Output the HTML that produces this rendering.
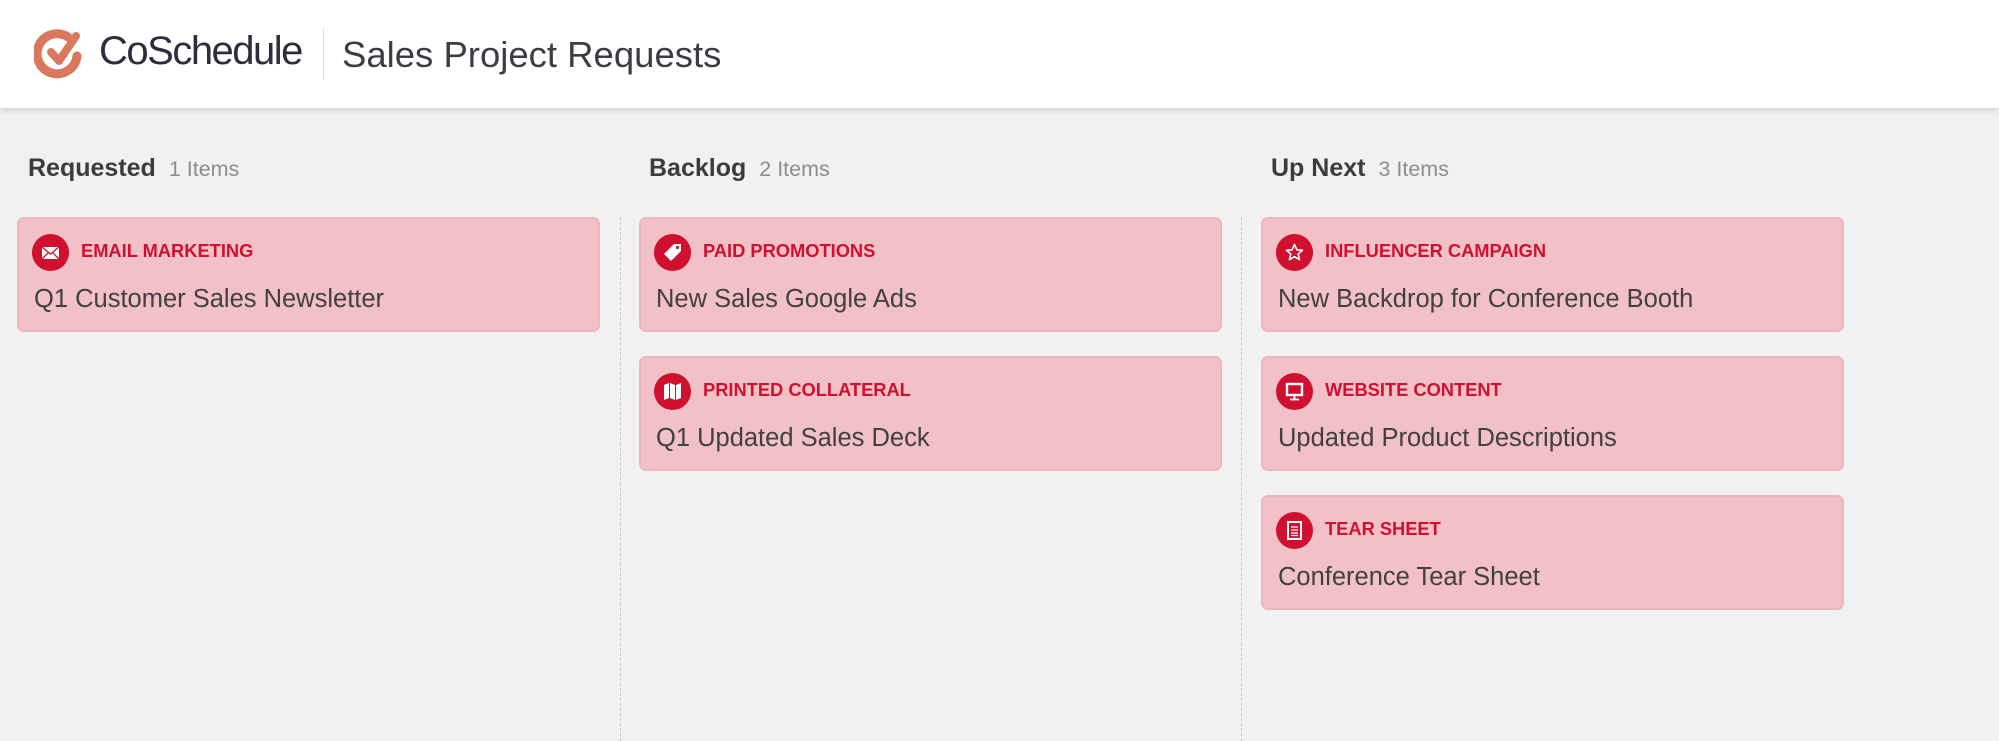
<!DOCTYPE html>
<html><head><meta charset="utf-8"><style>
*{margin:0;padding:0;box-sizing:border-box}
body{width:1999px;height:741px;background:#f1f1f1;font-family:"Liberation Sans",Arial,sans-serif;position:relative;overflow:hidden}
.hdr{position:absolute;left:0;top:0;width:1999px;height:108px;background:#fff;box-shadow:0 2px 6px rgba(0,0,0,.15)}
.brand{position:absolute;left:99px;top:29px;font-size:40px;color:#2f2d3d;letter-spacing:-1.5px}
.div{position:absolute;left:323px;top:28px;width:1px;height:52px;background:#ddd}
.title{position:absolute;left:342px;top:34px;font-size:36.5px;color:#3f3b44}
.colh{position:absolute;top:154px;font-size:25px;font-weight:bold;color:#3c3c3c}
.colh span{font-weight:normal;font-size:21.5px;color:#8d8d8d;margin-left:13px}
.sep{position:absolute;top:217px;height:524px;border-left:1px dashed #c9c9c9}
.card{position:absolute;width:583px;height:115px;background:#f2c1c8;border:2px solid #ebb6be;border-radius:7px}
.ic{position:absolute;left:13px;top:15px;width:37px;height:37px;border-radius:50%;background:#d10f2f}
.ic svg{position:absolute;left:9px;top:9px}
.lab{position:absolute;left:62px;top:21px;font-size:18.3px;font-weight:bold;color:#d10f2f}
.tt{position:absolute;left:15px;top:66px;font-size:25.5px;color:#404040}
</style></head><body>
<div class="hdr">
<svg style="position:absolute;left:34px;top:28px" width="52" height="52" viewBox="0 0 52 52"><path d="M34 9 A20 20 0 1 0 43 28" fill="none" stroke="#d9775f" stroke-width="9" stroke-linecap="round"/><path d="M17 24 L25 33 L42 8" fill="none" stroke="#d9775f" stroke-width="8" stroke-linecap="round" stroke-linejoin="round"/></svg>
<div class="brand">CoSchedule</div>
<div class="div"></div>
<div class="title">Sales Project Requests</div>
</div>
<div class="colh" style="left:28px">Requested<span>1 Items</span></div>
<div class="colh" style="left:649px">Backlog<span>2 Items</span></div>
<div class="colh" style="left:1271px">Up Next<span>3 Items</span></div>
<div class="sep" style="left:620px"></div>
<div class="sep" style="left:1241px"></div>

<div class="card" style="left:17px;top:217px"><div class="ic"><svg width="19" height="19" viewBox="0 0 19 19"><rect x="1" y="4" width="17" height="12" fill="#fff"/><path d="M1 4 L9.5 11 L18 4 M1 16 L7 10 M18 16 L12 10" stroke="#d10f2f" stroke-width="1.3" fill="none"/></svg></div><div class="lab">EMAIL MARKETING</div><div class="tt">Q1 Customer Sales Newsletter</div></div>

<div class="card" style="left:639px;top:217px"><div class="ic"><svg width="19" height="19" viewBox="0 0 19 19"><path d="M11 1 L18 1 L18 8 L8 18 L1 11 Z" fill="#fff"/><circle cx="14.5" cy="4.5" r="1.6" fill="#d10f2f"/></svg></div><div class="lab">PAID PROMOTIONS</div><div class="tt">New Sales Google Ads</div></div>

<div class="card" style="left:639px;top:356px"><div class="ic"><svg width="19" height="19" viewBox="0 0 19 19"><path d="M1 3 L6 1 L6 16 L1 18 Z M7 1 L12 3 L12 18 L7 16 Z M13 3 L18 1 L18 16 L13 18 Z" fill="#fff"/></svg></div><div class="lab">PRINTED COLLATERAL</div><div class="tt">Q1 Updated Sales Deck</div></div>

<div class="card" style="left:1261px;top:217px"><div class="ic"><svg width="19" height="19" viewBox="0 0 19 19"><path d="M9.5 1.5 L11.9 6.8 L17.5 7.3 L13.2 11 L14.5 16.6 L9.5 13.7 L4.5 16.6 L5.8 11 L1.5 7.3 L7.1 6.8 Z" fill="none" stroke="#fff" stroke-width="1.6" stroke-linejoin="round"/></svg></div><div class="lab">INFLUENCER CAMPAIGN</div><div class="tt">New Backdrop for Conference Booth</div></div>

<div class="card" style="left:1261px;top:356px"><div class="ic"><svg width="19" height="19" viewBox="0 0 19 19"><rect x="2" y="2" width="15" height="11" fill="none" stroke="#fff" stroke-width="2.4"/><path d="M9.5 14 V17 M5 17.5 H14" stroke="#fff" stroke-width="1.8"/></svg></div><div class="lab">WEBSITE CONTENT</div><div class="tt">Updated Product Descriptions</div></div>

<div class="card" style="left:1261px;top:495px"><div class="ic"><svg width="19" height="19" viewBox="0 0 19 19"><rect x="3" y="1" width="13" height="17" fill="none" stroke="#fff" stroke-width="2"/><path d="M6 6 H13 M6 9 H13 M6 12 H13 M6 14.5 H13" stroke="#fff" stroke-width="1.2"/></svg></div><div class="lab">TEAR SHEET</div><div class="tt">Conference Tear Sheet</div></div>
</body></html>
